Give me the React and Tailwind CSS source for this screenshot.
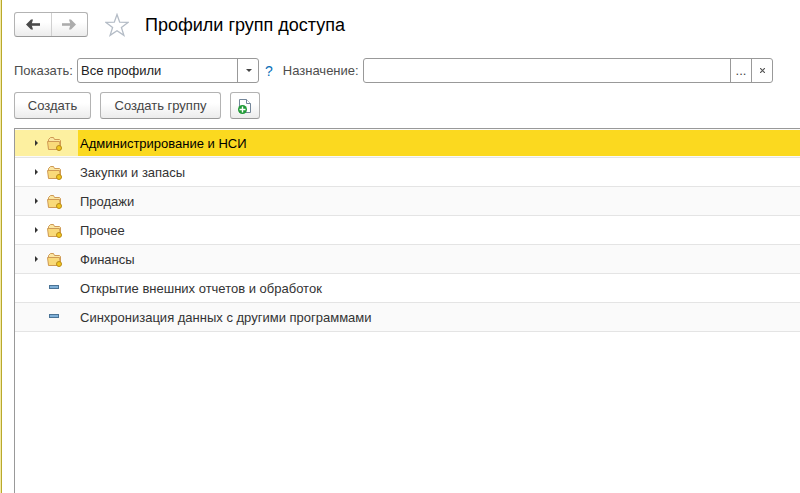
import React, { useState } from 'react';

const profiles = [
  { id: 1, name: 'Администрирование и НСИ', group: true },
  { id: 2, name: 'Закупки и запасы', group: true },
  { id: 3, name: 'Продажи', group: true },
  { id: 4, name: 'Прочее', group: true },
  { id: 5, name: 'Финансы', group: true },
  { id: 6, name: 'Открытие внешних отчетов и обработок', group: false },
  { id: 7, name: 'Синхронизация данных с другими программами', group: false },
];

const ArrowIcon = ({ className }) => (
  <svg className={className} width="14" height="11" viewBox="0 0 14 11" fill="none" stroke="currentColor">
    <path strokeWidth="2.6" d="M14 5.5H4" />
    <path fill="currentColor" stroke="none" d="M0 5.5L5 0.5H7L5.5 5.5L7 10.5H5Z" />
  </svg>
);

const StarIcon = () => (
  <svg width="24" height="24" viewBox="0 0 24 24" fill="none" stroke="#b4bcc6">
    <path strokeWidth="1.3" d="M12 1.5L14.7 9.2L23 9.4L16.4 14.4L18.9 22.4L12 17.7L5.1 22.4L7.6 14.4L1 9.4L9.3 9.2Z" />
  </svg>
);

const CopyIcon = () => (
  <svg width="16" height="16" viewBox="0 0 16 16" fill="none">
    <path fill="#fff" stroke="#74869a" d="M2.5 1.5H9.5L13.5 5.5V14.5H2.5Z" />
    <path fill="#fff" stroke="#74869a" d="M9.5 1.5V5.5H13.5" />
    <circle cx="5.5" cy="11.5" r="4.5" fill="#1f9a36" />
    <path stroke="#fff" strokeWidth="1.4" d="M5.5 8.5V14.5M2.5 11.5H8.5" />
  </svg>
);

const FolderIcon = () => (
  <svg className="block" width="16" height="16" viewBox="0 0 16 16" fill="none">
    <path fill="#fbe6a2" stroke="#cf9a55" d="M1.5 13.5V4.5L3.5 2.5H6.5L7.5 4.5H12.5L13.5 5.5V13.5Z" />
    <path fill="#f9da7a" stroke="#cf9a55" strokeLinejoin="round" d="M0.5 6.5H12.5L13.5 14.5H1.5Z" />
    <circle cx="12" cy="13" r="2.5" fill="#f2c81e" stroke="#b8891a" />
  </svg>
);

const ItemIcon = () => (
  <svg className="block" width="16" height="16" viewBox="0 0 16 16">
    <rect x="2.5" y="5.5" width="9" height="3" fill="#7fb0d8" stroke="#4a7396" />
  </svg>
);

const buttonClass =
  'h-[27px] rounded-[3px] border border-[#b3b3b3] border-b-[#999] bg-linear-to-b from-white from-40% to-[#ececec] text-[#444]';

export default function App() {
  const [selected, setSelected] = useState(1);
  const [purpose, setPurpose] = useState('');

  return (
    <div className="flex min-h-screen flex-col overflow-hidden border-l border-[#f3e9a4] bg-white font-['Liberation_Sans',Arial,sans-serif] text-[13px] leading-4 text-[#333]">
      <div className="flex flex-1 flex-col border-l border-[#b9a92b] pl-3">
        {/* Title bar */}
        <header className="flex items-center pt-3">
          <div className="flex h-[25px] w-[74px] rounded-[3px] border border-[#b3b3b3] border-b-[#999] bg-linear-to-b from-white from-40% to-[#ececec]">
            <button aria-label="Назад" className="flex flex-1 items-center justify-center border-r border-[#d0d0d0] text-[#4a4a4a]">
              <ArrowIcon />
            </button>
            <button aria-label="Вперед" className="flex flex-1 items-center justify-center text-[#acacac]">
              <ArrowIcon className="rotate-180" />
            </button>
          </div>
          <button aria-label="Добавить в избранное" className="ml-[17px]">
            <StarIcon />
          </button>
          <h1 className="ml-4 text-[18px] leading-6 text-black">Профили групп доступа</h1>
        </header>

        {/* Filters */}
        <div className="mt-[21px] flex items-center">
          <label htmlFor="show" className="w-[63px] text-[#4d4d4d]">Показать:</label>
          <div className="relative h-[25px] w-[182px]">
            <select id="show" className="h-full w-full appearance-none rounded-[3px] border border-[#999] bg-white pl-[3px] text-[#222]">
              <option>Все профили</option>
            </select>
            <span className="pointer-events-none absolute inset-y-0 right-0 flex w-[22px] items-center justify-center border-l border-[#999]">
              <svg width="6" height="3" viewBox="0 0 6 3" fill="#444">
                <path d="M0 0H6L3 3Z" />
              </svg>
            </span>
          </div>
          <button className="ml-1.5 text-[14px] text-[#0a6fb8]">?</button>
          <label htmlFor="purpose" className="ml-2.5 w-20 text-[#4d4d4d]">Назначение:</label>
          <div className="mr-[27px] flex h-[25px] flex-1 rounded-[3px] border border-[#999]">
            <input
              id="purpose"
              className="min-w-0 flex-1 px-1 outline-none"
              value={purpose}
              onChange={(e) => setPurpose(e.target.value)}
            />
            <button aria-label="Выбрать" className="w-[21px] border-l border-[#999] text-[#444]">...</button>
            <button
              aria-label="Очистить"
              className="flex w-[21px] items-center justify-center border-l border-[#999] text-[#555]"
              onClick={() => setPurpose('')}
            >
              <svg width="5" height="5" viewBox="0 0 5 5" stroke="currentColor" strokeWidth="1.2">
                <path d="M0 0L5 5M5 0L0 5" />
              </svg>
            </button>
          </div>
        </div>

        {/* Commands */}
        <div className="mt-[9px] flex gap-[9px]">
          <button className={`${buttonClass} w-[77px]`}>Создать</button>
          <button className={`${buttonClass} w-[121px]`}>Создать группу</button>
          <button aria-label="Скопировать" className={`${buttonClass} flex w-[30px] items-center justify-center`}>
            <CopyIcon />
          </button>
        </div>

        {/* Profiles list */}
        <div className="mt-[9px] flex-1 border-t border-l border-[#999]">
          <table className="w-full border-separate border-spacing-0">
            <tbody>
              {profiles.map((profile) => {
                const active = profile.id === selected;
                return (
                  <tr
                    key={profile.id}
                    className="odd:bg-[#fafafa]"
                    onClick={() => setSelected(profile.id)}
                  >
                    <td className="w-[63px] border-b border-[#e4e4e4] p-0">
                      <div className={`my-px flex h-[26px] items-center pl-5 ${active ? 'bg-[#fdf0a0]' : ''}`}>
                        <svg className="mr-[9px]" width="3" height="6" viewBox="0 0 3 6" fill={profile.group ? '#333' : 'none'}>
                          <path d="M0 0L3 3L0 6Z" />
                        </svg>
                        {profile.group ? <FolderIcon /> : <ItemIcon />}
                      </div>
                    </td>
                    <td className="border-b border-[#e4e4e4] p-0">
                      <div className={`my-px flex h-[26px] items-center pt-0.5 pl-0.5 ${active ? 'bg-[#fbd91f] text-black' : ''}`}>
                        {profile.name}
                      </div>
                    </td>
                  </tr>
                );
              })}
            </tbody>
          </table>
        </div>
      </div>
    </div>
  );
}
